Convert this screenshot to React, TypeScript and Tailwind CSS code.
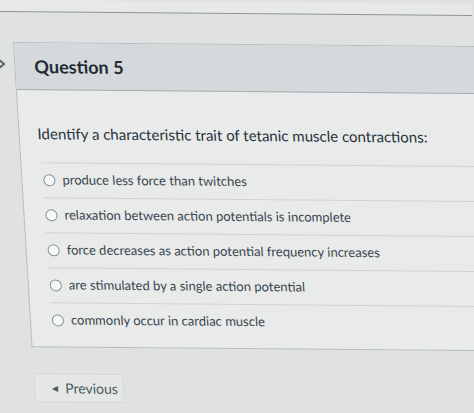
import React from 'react';

const options = [
    'produce less force than twitches',
    'relaxation between action potentials is incomplete',
    'force decreases as action potential frequency increases',
    'are stimulated by a single action potential',
    'commonly occur in cardiac muscle',
];

export default function App() {
    return (
        <div className="relative h-[413px] w-[474px] overflow-hidden bg-[#e0e2e1] font-['Lato','Open_Sans',sans-serif]">
            <div className="origin-[13px_43px] [transform:rotate(0.5deg)_skewX(4deg)]">
                <div className="h-[12px] border-b border-[#8e9396] bg-[#e7e9e8]" />

                <div className="pl-[13px] pt-[30px]">
                    <div className="w-[520px] border-y border-l border-[#b7bcbf] bg-[#e9ebea]">
                        <div className="flex h-[47px] items-center border-b border-[#a6acaf] bg-[#d4d9dc] pl-[19px]">
                            <h2 className="text-[18px] font-bold text-[#1f2a32]">Question 5</h2>
                        </div>

                        <div className="pb-[9px] pl-[18px] pt-[31px]">
                            <p className="text-[15px] leading-6 text-[#27333c]">
                                Identify a characteristic trait of tetanic muscle contractions:
                            </p>

                            <div className="mt-[17px] ml-[2px]">
                                {options.map((opt) => (
                                    <div key={opt} className="flex h-[35px] items-center border-t border-[#cfd3d4]">
                                        <span className="ml-[1px] h-[12px] w-[12px] rounded-full border border-[#879095] bg-[#f7f8f8]" />
                                        <span className="ml-[7px] text-[13px] text-[#3a4750]">{opt}</span>
                                    </div>
                                ))}
                            </div>
                        </div>
                    </div>

                    <button className="mt-[26px] flex h-[29px] w-[90px] items-center border border-[#d3d6d7] bg-[#e5e7e6] pl-[17px] text-[#4b5962]">
                        <span className="text-[8px]">◀</span>
                        <span className="ml-[7px] text-[14px]">Previous</span>
                    </button>
                </div>
            </div>

            <svg className="absolute left-[-4px] top-[58px]" width="10" height="12" viewBox="0 0 10 12" fill="none">
                <path d="M2 1l6 5-6 5" stroke="#5d6468" strokeWidth="2" />
            </svg>
        </div>
    );
}
